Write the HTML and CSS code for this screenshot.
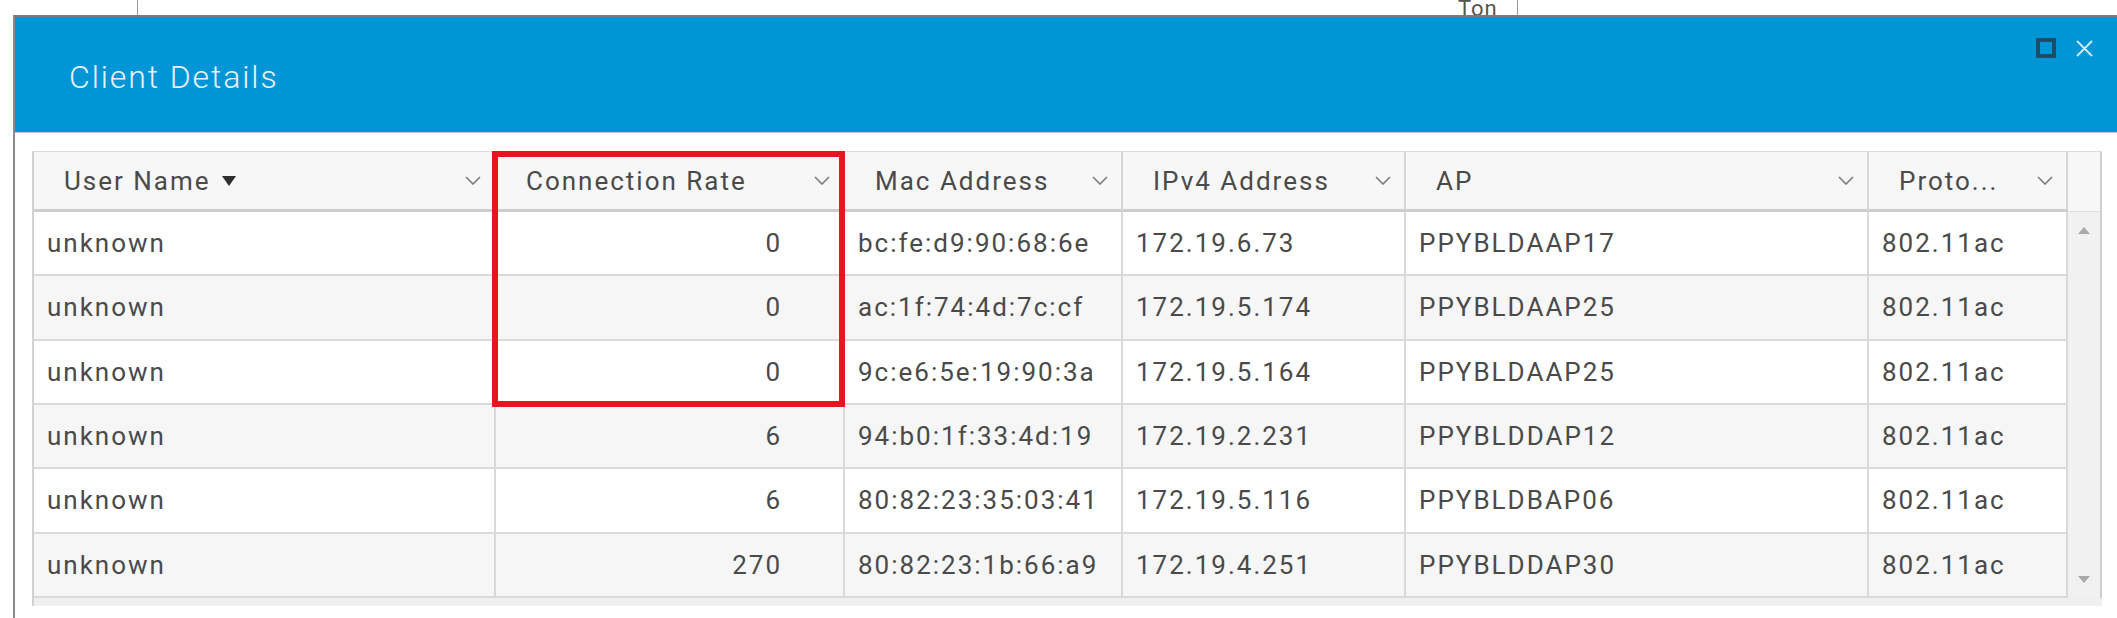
FILE: index.html
```html
<!DOCTYPE html>
<html lang="en">
<head>
<meta charset="utf-8">
<title>Client Details</title>
<link rel="stylesheet" href="styles.css">
</head>
<body>
<div class="page">
  <div class="backdrop">
    <span class="bd-line bd-line-1"></span>
    <span class="bd-text">Ton</span>
    <span class="bd-line"></span>
  </div>
  <div class="modal">
    <div class="modal-head">
      <h1 class="modal-title">Client Details</h1>
      <div class="modal-tools">
        <svg class="ico-max" width="20" height="20" viewBox="0 0 20 20"><rect x="2" y="2" width="16" height="16" fill="none" stroke="#1d4a62" stroke-width="3.8"/></svg>
        <svg class="ico-close" width="17" height="17" viewBox="0 0 17 17"><path d="M1 1 L16 16 M16 1 L1 16" stroke="#d3e8f4" stroke-width="1.8" fill="none"/></svg>
      </div>
    </div>
    <div class="modal-body">
      <div class="table">
        <div class="thead">
          <div class="th"><span class="th-label">User Name<svg class="sort" width="14" height="10" viewBox="0 0 14 10"><polygon points="0,0 14,0 7,10" fill="#2e2e2e"/></svg></span><svg class="chev" width="16" height="9" viewBox="0 0 16 9"><path d="M1 1 L8 8 L15 1" stroke="#7c7c7c" stroke-width="1.6" fill="none"/></svg></div>
          <div class="th"><span class="th-label">Connection Rate</span><svg class="chev" width="16" height="9" viewBox="0 0 16 9"><path d="M1 1 L8 8 L15 1" stroke="#7c7c7c" stroke-width="1.6" fill="none"/></svg></div>
          <div class="th"><span class="th-label">Mac Address</span><svg class="chev" width="16" height="9" viewBox="0 0 16 9"><path d="M1 1 L8 8 L15 1" stroke="#7c7c7c" stroke-width="1.6" fill="none"/></svg></div>
          <div class="th"><span class="th-label">IPv4 Address</span><svg class="chev" width="16" height="9" viewBox="0 0 16 9"><path d="M1 1 L8 8 L15 1" stroke="#7c7c7c" stroke-width="1.6" fill="none"/></svg></div>
          <div class="th"><span class="th-label">AP</span><svg class="chev" width="16" height="9" viewBox="0 0 16 9"><path d="M1 1 L8 8 L15 1" stroke="#7c7c7c" stroke-width="1.6" fill="none"/></svg></div>
          <div class="th"><span class="th-label">Proto...</span><svg class="chev" width="16" height="9" viewBox="0 0 16 9"><path d="M1 1 L8 8 L15 1" stroke="#7c7c7c" stroke-width="1.6" fill="none"/></svg></div>
          <div class="th th-scroll"></div>
        </div>
        <div class="tbody">
          <div class="rows">
            <div class="tr"><div class="td">unknown</div><div class="td num">0</div><div class="td">bc:fe:d9:90:68:6e</div><div class="td">172.19.6.73</div><div class="td">PPYBLDAAP17</div><div class="td">802.11ac</div></div>
            <div class="tr"><div class="td">unknown</div><div class="td num">0</div><div class="td">ac:1f:74:4d:7c:cf</div><div class="td">172.19.5.174</div><div class="td">PPYBLDAAP25</div><div class="td">802.11ac</div></div>
            <div class="tr"><div class="td">unknown</div><div class="td num">0</div><div class="td">9c:e6:5e:19:90:3a</div><div class="td">172.19.5.164</div><div class="td">PPYBLDAAP25</div><div class="td">802.11ac</div></div>
            <div class="tr"><div class="td">unknown</div><div class="td num">6</div><div class="td">94:b0:1f:33:4d:19</div><div class="td">172.19.2.231</div><div class="td">PPYBLDDAP12</div><div class="td">802.11ac</div></div>
            <div class="tr"><div class="td">unknown</div><div class="td num">6</div><div class="td">80:82:23:35:03:41</div><div class="td">172.19.5.116</div><div class="td">PPYBLDBAP06</div><div class="td">802.11ac</div></div>
            <div class="tr"><div class="td">unknown</div><div class="td num">270</div><div class="td">80:82:23:1b:66:a9</div><div class="td">172.19.4.251</div><div class="td">PPYBLDDAP30</div><div class="td">802.11ac</div></div>
          </div>
          <div class="vscroll">
            <svg width="12" height="7" viewBox="0 0 12 7"><polygon points="0,7 12,7 6,0" fill="#a9a9a9"/></svg>
            <svg width="12" height="7" viewBox="0 0 12 7"><polygon points="0,0 12,0 6,7" fill="#a9a9a9"/></svg>
          </div>
        </div>
        <div class="hscroll"></div>
        <div class="highlight"></div>
      </div>
    </div>
  </div>
</div>
</body>
</html>
```

FILE: styles.css
```css
* { box-sizing: border-box; }

html, body {
  margin: 0;
  padding: 0;
  background: #ffffff;
}

body {
  width: 2117px;
  height: 618px;
  overflow: hidden;
  font-family: Roboto, "Liberation Sans", Arial, sans-serif;
}

.backdrop {
  height: 15px;
  display: flex;
  align-items: flex-end;
  overflow: hidden;
}

.bd-line {
  width: 1px;
  height: 15px;
  background: #9a9a9a;
}

.bd-line-1 {
  margin-left: 137px;
}

.bd-text {
  width: 59px;
  margin-left: 1320px;
  font-size: 22px;
  line-height: 22px;
  margin-bottom: -5px;
  color: #555;
  letter-spacing: 1px;
}

.modal {
  margin-left: 13px;
  width: 2104px;
  height: 603px;
  border-left: 2px solid #8a8a8a;
  border-top: 2px solid #7b7b7b;
  background: #ffffff;
}

.modal-head {
  height: 116px;
  background: #0096d5;
  border-bottom: 1px solid #b7c9d2;
  display: flex;
  justify-content: space-between;
  align-items: flex-start;
  padding: 0 24px 0 54px;
}

.modal-title {
  margin: 0;
  padding-top: 40px;
  font-size: 32px;
  line-height: 40px;
  font-weight: 300;
  letter-spacing: 1.9px;
  color: #e6f3fb;
}

.modal-tools {
  margin-top: 21px;
  display: flex;
  align-items: center;
  gap: 20px;
}

.modal-body {
  padding: 18px 15px 0 17px;
}

.table {
  position: relative;
  width: 2070px;
  border-top: 1px solid #dcdcdc;
  border-left: 2px solid #d2d2d2;
  font-size: 26px;
  letter-spacing: 2px;
}

.thead {
  display: grid;
  grid-template-columns: 462px 349px 278px 283px 463px 199px 34px;
  height: 60px;
}

.th {
  display: flex;
  align-items: center;
  justify-content: space-between;
  padding: 0 13px 0 30px;
  background: #f7f7f7;
  border-right: 2px solid #d6d6d6;
  border-bottom: 3px solid #cdcdcd;
  color: #4a4a4a;
  white-space: nowrap;
}

.th-label {
  display: flex;
  align-items: center;
}

.sort {
  margin-left: 11px;
}

.th-scroll {
  padding: 0;
  border-right: 2px solid #cfcfcf;
  border-bottom: 1px solid #dedede;
}

.tbody {
  display: flex;
}

.rows {
  width: 2034px;
}

.tr {
  display: grid;
  grid-template-columns: 462px 349px 278px 283px 463px 199px;
  height: 64.33px;
  background: #ffffff;
}

.tr:nth-child(even) {
  background: #f6f6f6;
}

.td {
  display: flex;
  align-items: center;
  padding: 0 10px 0 13px;
  border-right: 2px solid #d9d9d9;
  border-bottom: 2px solid #dadada;
  color: #4a4a4a;
  white-space: nowrap;
}

.td.num {
  justify-content: flex-end;
  padding-right: 61px;
}

.vscroll {
  width: 34px;
  background: #f1f1f1;
  border-right: 2px solid #cfcfcf;
  display: flex;
  flex-direction: column;
  justify-content: space-between;
  align-items: center;
  padding: 15px 0 15px;
}

.hscroll {
  height: 8px;
  background: #efefef;
}

.highlight {
  position: absolute;
  left: 458px;
  top: -1px;
  width: 353px;
  height: 256px;
  border: 6px solid #e8141f;
  pointer-events: none;
}
```
